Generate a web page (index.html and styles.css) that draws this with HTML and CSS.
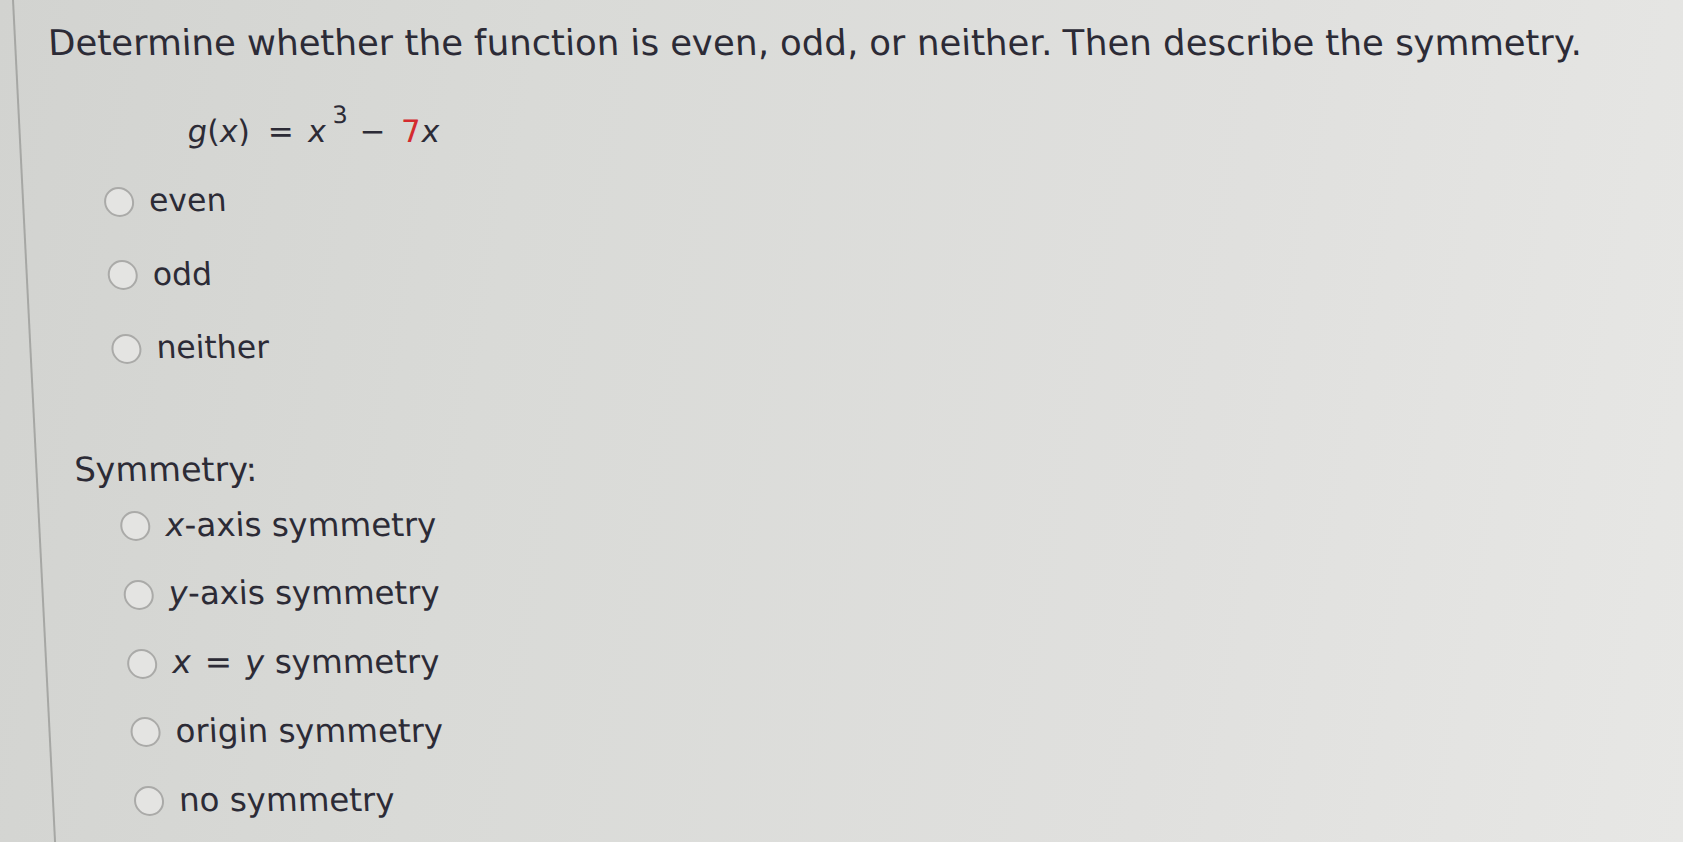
FILE: index.html
```html
<!DOCTYPE html>
<html lang="en">
<head>
<meta charset="utf-8">
<title>Even, odd, or neither</title>
<link rel="stylesheet" href="styles.css">
</head>
<body>
<div class="page">
  <p class="question">Determine whether the function is even, odd, or neither. Then describe the symmetry.</p>
  <p class="equation"><span class="var">g</span>(<span class="var">x</span>)<span class="eq">=</span><span class="var">x</span><sup class="pow">3</sup><span class="minus">−</span><span class="coef">7</span><span class="var">x</span></p>

  <div class="options first">
    <label class="option"><span class="radio"></span><span class="label">even</span></label>
    <label class="option"><span class="radio"></span><span class="label">odd</span></label>
    <label class="option"><span class="radio"></span><span class="label">neither</span></label>
  </div>

  <p class="heading">Symmetry:</p>
  <div class="options second">
    <label class="option"><span class="radio"></span><span class="label"><span class="var">x</span>-axis symmetry</span></label>
    <label class="option"><span class="radio"></span><span class="label"><span class="var">y</span>-axis symmetry</span></label>
    <label class="option"><span class="radio"></span><span class="label"><span class="var">x</span> <span class="eqs">=</span> <span class="var">y</span> symmetry</span></label>
    <label class="option"><span class="radio"></span><span class="label">origin symmetry</span></label>
    <label class="option"><span class="radio"></span><span class="label">no symmetry</span></label>
  </div>
</div>
</body>
</html>
```

FILE: styles.css
```css
html, body {
  margin: 0;
  padding: 0;
  height: 100%;
  overflow: hidden;
}

body {
  background: linear-gradient(100deg, #d2d3d0 0%, #d9dad7 30%, #e0e0de 70%, #e7e7e5 100%);
  font-family: "DejaVu Sans", Verdana, sans-serif;
  font-size: 31px;
  color: #2c2b36;
}

.page {
  margin-left: 12px;
  height: 100vh;
  padding-top: 23px;
  border-left: 2px solid #a6a7a4;
  transform: skewX(2.86deg);
  transform-origin: 0 0;
  box-sizing: border-box;
}

p {
  margin: 0;
  line-height: 40px;
  white-space: nowrap;
}

.question {
  margin-left: 32px;
  font-size: 35.5px;
}

.equation {
  margin-top: 48px;
  margin-left: 167px;
}

.var {
  font-style: italic;
}

.eq {
  margin: 0 14px 0 18px;
}

.pow {
  font-size: 24px;
  vertical-align: 19px;
  line-height: 0;
  margin-left: 7px;
}

.minus {
  margin: 0 16px 0 11px;
}

.coef {
  color: #d42b2f;
}

.options {
  display: flex;
  flex-direction: column;
}

.options.first {
  margin-top: 29px;
  gap: 33.5px;
  margin-left: 80px;
  font-size: 31.5px;
}

.options.second {
  margin-top: 14.5px;
  gap: 28.8px;
  margin-left: 80px;
  font-size: 32.5px;
}

.option {
  display: flex;
  align-items: center;
  height: 40px;
  line-height: 40px;
  white-space: nowrap;
}

.radio {
  flex: none;
  width: 30px;
  height: 30px;
  box-sizing: border-box;
  border: 2px solid #aaaaa8;
  border-radius: 50%;
  background: #e4e4e2;
  margin-top: 3px;
  margin-right: 15px;
}

.eqs {
  margin: 0 3px;
}

.heading {
  margin-top: 83px;
  margin-left: 37px;
  font-size: 33.5px;
}
```
